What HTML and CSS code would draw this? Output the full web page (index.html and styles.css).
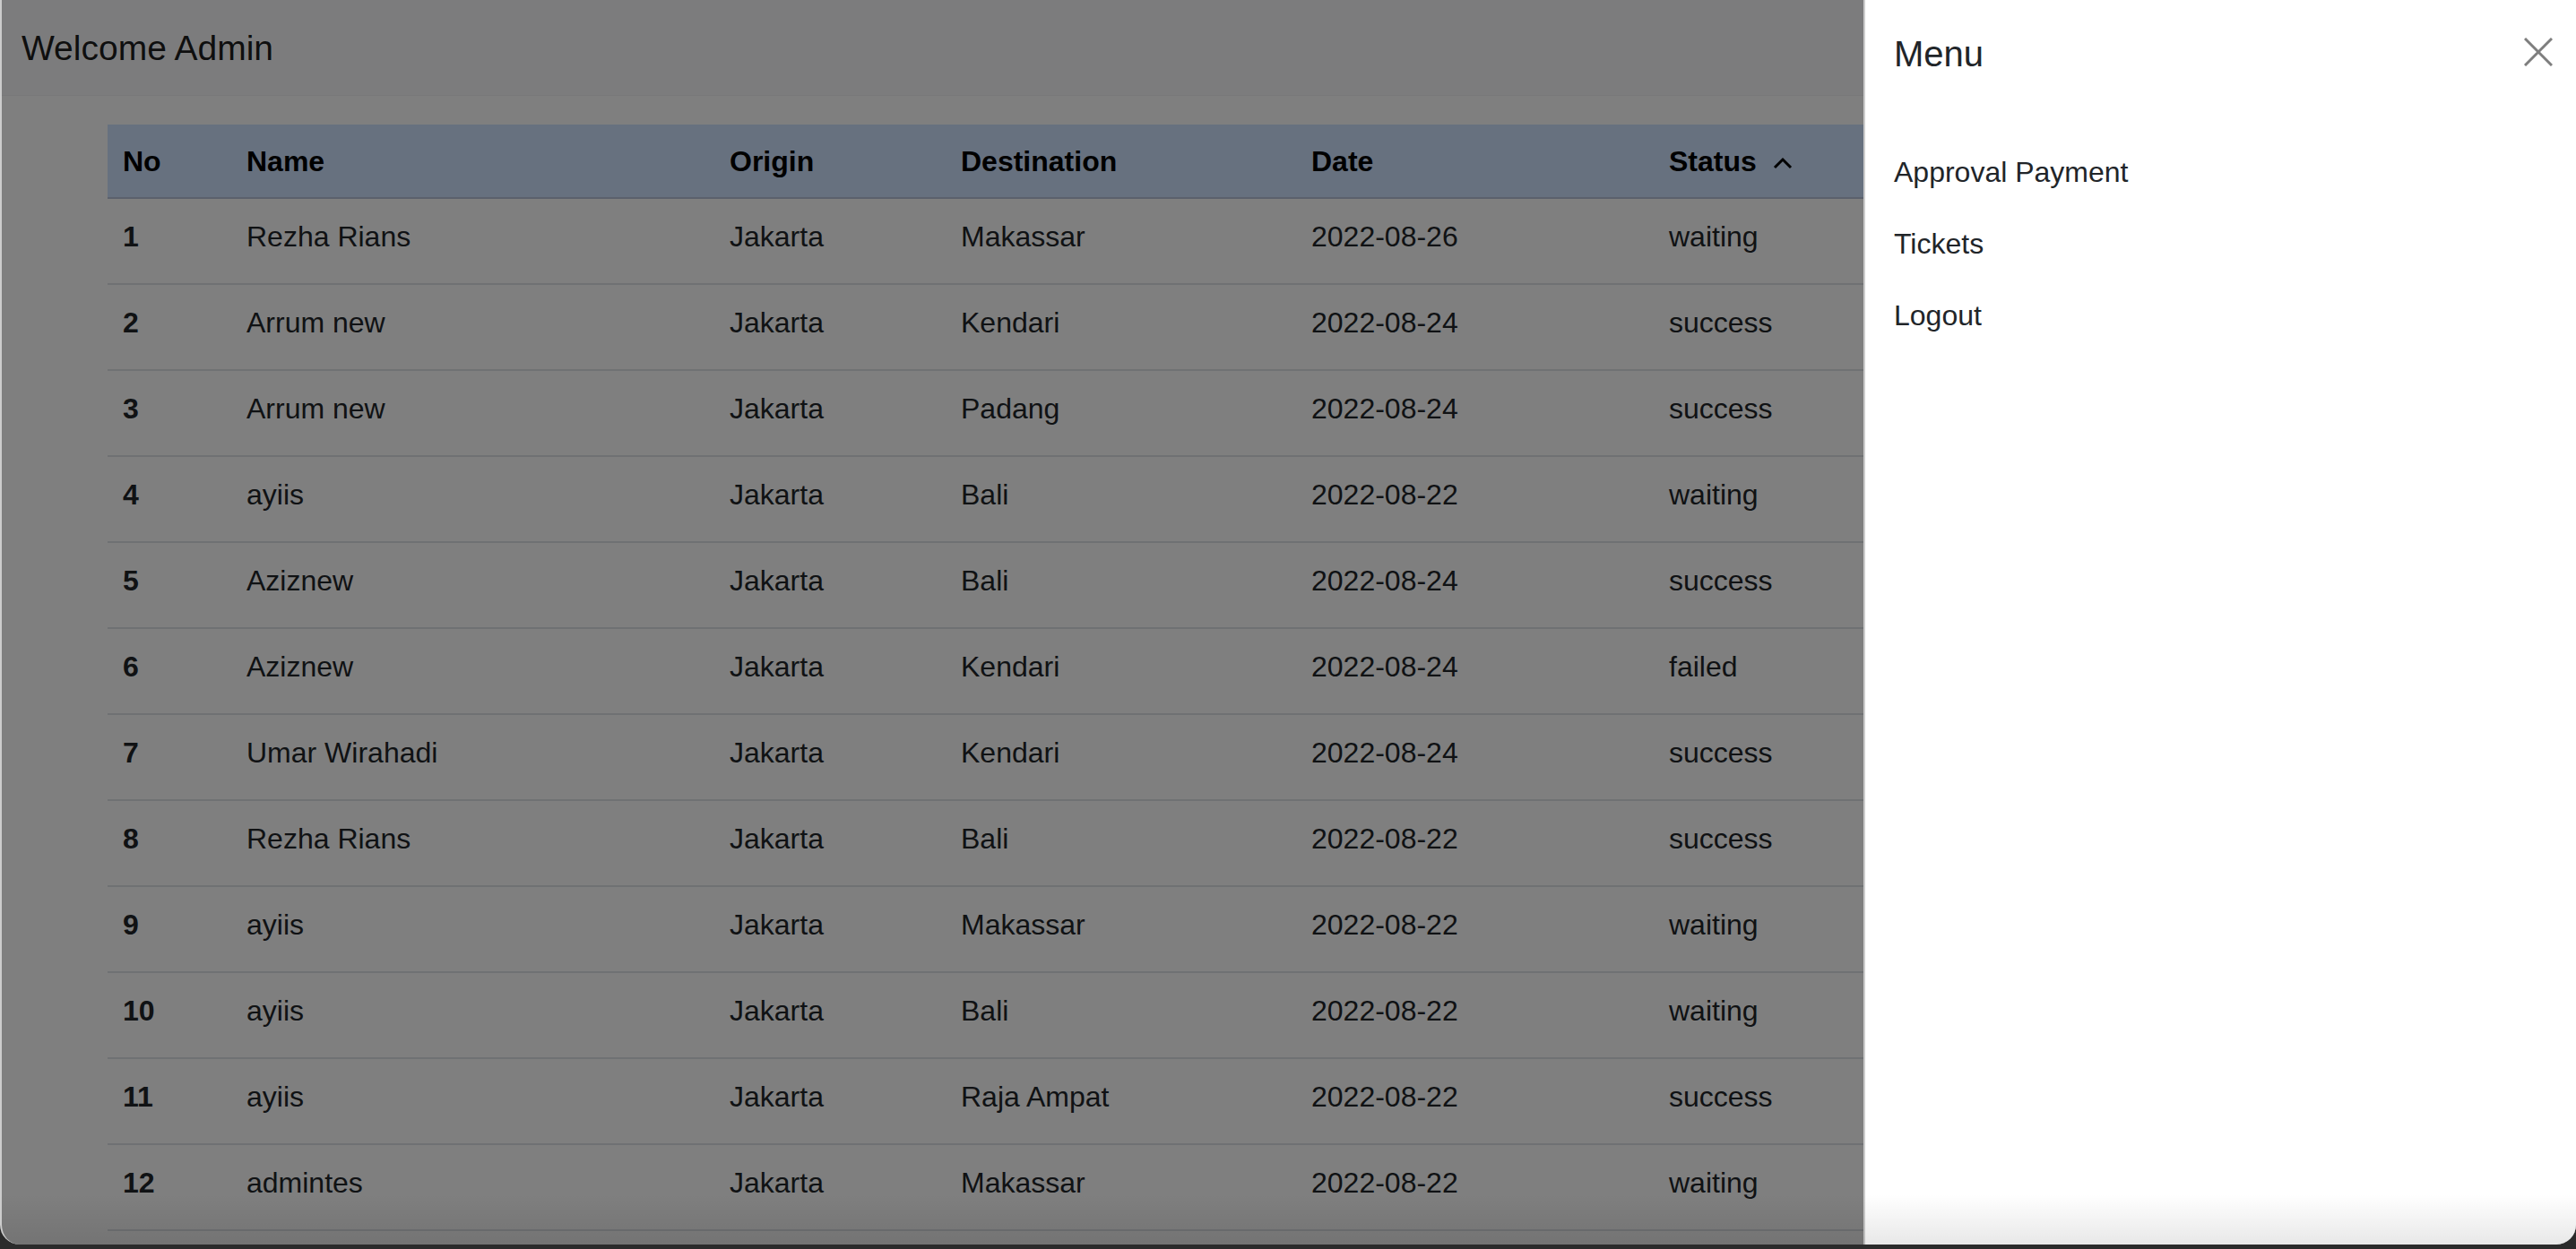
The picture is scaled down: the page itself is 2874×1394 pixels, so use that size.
FILE: index.html
```html
<!DOCTYPE html>
<html lang="en">
<head>
  <meta charset="UTF-8" />
  <meta name="viewport" content="width=device-width, initial-scale=1.0"/>
  <title>Admin - Payments</title>
  <link rel="stylesheet" href="styles.css">
</head>
<body>
  <div class="app">
    <nav class="navbar">
      <span class="brand">Welcome Admin</span>
    </nav>

    <main>
      <table class="table">
        <colgroup>
          <col class="c-no"><col class="c-name"><col class="c-origin"><col class="c-dest"><col class="c-date"><col>
        </colgroup>
        <thead>
          <tr>
            <th>No</th>
            <th>Name</th>
            <th>Origin</th>
            <th>Destination</th>
            <th>Date</th>
            <th>Status <svg class="sort" width="22" height="14" viewBox="0 0 22 14"><polyline points="2,12 11,3 20,12" fill="none" stroke="#000" stroke-width="3"/></svg></th>
          </tr>
        </thead>
        <tbody>
          <tr><th>1</th><td>Rezha Rians</td><td>Jakarta</td><td>Makassar</td><td>2022-08-26</td><td>waiting</td></tr>
          <tr><th>2</th><td>Arrum new</td><td>Jakarta</td><td>Kendari</td><td>2022-08-24</td><td>success</td></tr>
          <tr><th>3</th><td>Arrum new</td><td>Jakarta</td><td>Padang</td><td>2022-08-24</td><td>success</td></tr>
          <tr><th>4</th><td>ayiis</td><td>Jakarta</td><td>Bali</td><td>2022-08-22</td><td>waiting</td></tr>
          <tr><th>5</th><td>Aziznew</td><td>Jakarta</td><td>Bali</td><td>2022-08-24</td><td>success</td></tr>
          <tr><th>6</th><td>Aziznew</td><td>Jakarta</td><td>Kendari</td><td>2022-08-24</td><td>failed</td></tr>
          <tr><th>7</th><td>Umar Wirahadi</td><td>Jakarta</td><td>Kendari</td><td>2022-08-24</td><td>success</td></tr>
          <tr><th>8</th><td>Rezha Rians</td><td>Jakarta</td><td>Bali</td><td>2022-08-22</td><td>success</td></tr>
          <tr><th>9</th><td>ayiis</td><td>Jakarta</td><td>Makassar</td><td>2022-08-22</td><td>waiting</td></tr>
          <tr><th>10</th><td>ayiis</td><td>Jakarta</td><td>Bali</td><td>2022-08-22</td><td>waiting</td></tr>
          <tr><th>11</th><td>ayiis</td><td>Jakarta</td><td>Raja Ampat</td><td>2022-08-22</td><td>success</td></tr>
          <tr><th>12</th><td>admintes</td><td>Jakarta</td><td>Makassar</td><td>2022-08-22</td><td>waiting</td></tr>
        </tbody>
      </table>
    </main>

    <!-- menu is open: backdrop over the page, panel on the right -->
    <div class="backdrop"></div>
    <aside class="offcanvas">
      <div class="offcanvas-header">
        <h5 class="offcanvas-title">Menu</h5>
        <button class="btn-close" aria-label="Close">
          <svg width="32" height="32" viewBox="0 0 32 32"><path d="M1 1L31 31M31 1L1 31" stroke="#000" stroke-width="3"/></svg>
        </button>
      </div>
      <div class="offcanvas-body">
        <a href="#">Approval Payment</a>
        <a href="#">Tickets</a>
        <a href="#">Logout</a>
      </div>
    </aside>
  </div>
</body>
</html>
```

FILE: styles.css
```css
*{margin:0;padding:0;box-sizing:border-box}
html,body{height:100%}
body{background:#2b2b2b;font-family:'Liberation Sans',Arial,sans-serif;color:#212529;overflow:hidden}
.app{position:relative;height:1389px;background:#fff;overflow:hidden;border-radius:0 0 22px 22px;border-left:2px solid #ccc}
.app::after{content:'';position:absolute;left:0;right:0;bottom:0;height:56px;background:linear-gradient(to bottom,rgba(0,0,0,0),rgba(0,0,0,.09));z-index:30}
.navbar{background:#f8f9fa;height:107px;padding:24px 22px;border-bottom:1px solid #f0f1f2}
.brand{font-size:39px;line-height:60px;color:rgba(0,0,0,.9)}
main{padding:32px 120px 0 118px}
.table{width:100%;border-collapse:collapse;table-layout:fixed;font-size:32px;text-align:left}
.c-no{width:138px}
.c-name{width:539px}
.c-origin{width:258px}
.c-dest{width:391px}
.c-date{width:399px}
.table thead th{background:#cfe2ff;line-height:47px;padding:18px 17px 16px;font-weight:700;color:#000;border-bottom:2px solid #b6c3d8}
.table tbody th,.table tbody td{line-height:40px;padding:22px 17px 32px;border-bottom:2px solid #dee2e6;vertical-align:top}
.table tbody th{font-weight:700}
.sort{margin-left:9px;vertical-align:2px}
.backdrop{position:absolute;inset:0;background:rgba(0,0,0,.5);z-index:10}
.offcanvas{position:absolute;top:0;right:0;bottom:0;width:795px;background:#fff;border-left:2px solid rgba(0,0,0,.2);z-index:20}
.offcanvas-header{display:flex;justify-content:space-between;align-items:flex-start;padding:36px 26px 0 32px}
.offcanvas-title{font-size:40px;line-height:48px;font-weight:500;color:#212529}
.btn-close{background:none;border:none;opacity:.5;margin-top:6px;cursor:pointer;line-height:0}
.offcanvas-body{padding:68px 32px}
.offcanvas-body a{display:block;font-size:32px;line-height:48px;padding:16px 0;color:#212529;text-decoration:none}
```
